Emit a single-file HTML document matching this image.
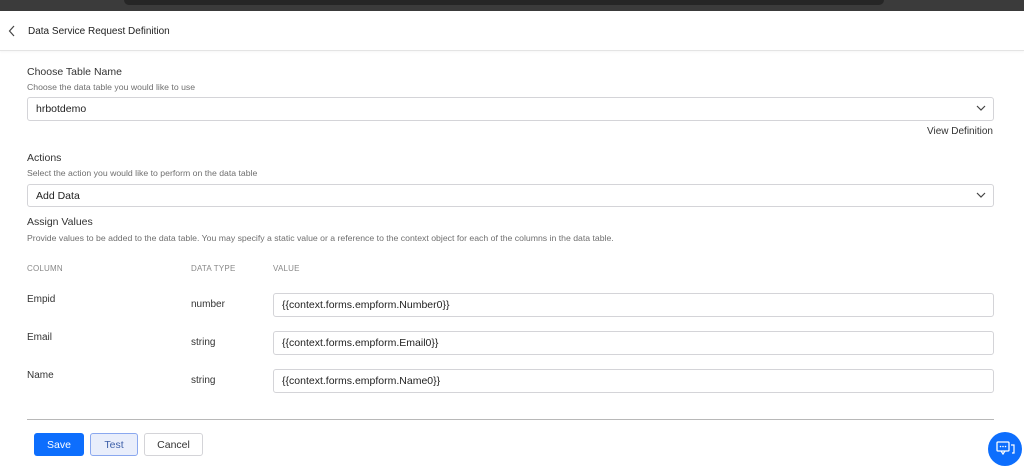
<!DOCTYPE html>
<html><head><meta charset="utf-8"><style>
*{box-sizing:border-box;margin:0;padding:0}
body{width:1024px;height:468px;overflow:hidden;background:#fff;font-family:"Liberation Sans",sans-serif;color:#202124;position:relative}
.a{position:absolute;white-space:nowrap}
.top{position:absolute;left:0;top:0;width:1024px;height:11px;background:#3b3b3b}
.top div{position:absolute;left:124px;width:760px;top:0;height:5px;background:#262626;border-radius:0 0 8px 8px}
.hdr{position:absolute;left:0;top:11px;width:1024px;height:40px;border-bottom:1px solid #e4e4e4;box-shadow:0 1px 2px rgba(0,0,0,.04)}
.h1{font-size:13px;color:#333}
.sub{font-size:8.7px;color:#6f6f6f}
.box{position:absolute;border:1px solid #d4d4d8;border-radius:3px;background:#fff;font-size:10.5px;color:#222;padding-left:8px;display:flex;align-items:center}
.th{font-size:8px;color:#888;letter-spacing:.2px}
.lbl{font-size:10px;color:#333}
.btn{position:absolute;top:433px;height:23px;border-radius:3px;font-size:10.5px;display:flex;align-items:center;justify-content:center}
</style></head><body>
<div class="top"><div></div></div>
<div class="hdr"></div>
<svg class="a" style="left:8px;top:25px" width="8" height="12"><path d="M6 1L1.5 6L6 11" fill="none" stroke="#444" stroke-width="1.2"/></svg>
<div class="a" style="left:28px;top:26px;font-size:10px;color:#222">Data Service Request Definition</div>

<div class="a h1" style="left:27px;top:66px;font-size:10.5px">Choose Table Name</div>
<div class="a sub" style="left:27px;top:82px">Choose the data table you would like to use</div>
<div class="box" style="left:27px;top:97px;width:967px;height:24px">hrbotdemo</div>
<svg class="a" style="left:976px;top:105px" width="10" height="7"><path d="M1 1L5 5L9 1" fill="none" stroke="#444" stroke-width="1.2"/></svg>
<div class="a" style="left:927px;top:126px;font-size:10px;color:#333">View Definition</div>

<div class="a h1" style="left:27px;top:152px;font-size:10.5px">Actions</div>
<div class="a sub" style="left:27px;top:168px">Select the action you would like to perform on the data table</div>
<div class="box" style="left:27px;top:184px;width:967px;height:23px">Add Data</div>
<svg class="a" style="left:976px;top:192px" width="10" height="7"><path d="M1 1L5 5L9 1" fill="none" stroke="#444" stroke-width="1.2"/></svg>

<div class="a h1" style="left:27px;top:216px;font-size:10.5px">Assign Values</div>
<div class="a sub" style="left:27px;top:233px">Provide values to be added to the data table. You may specify a static value or a reference to the context object for each of the columns in the data table.</div>

<div class="a th" style="left:27px;top:264px">COLUMN</div>
<div class="a th" style="left:191px;top:264px">DATA TYPE</div>
<div class="a th" style="left:273px;top:264px">VALUE</div>

<div class="a lbl" style="left:27px;top:294px">Empid</div>
<div class="a lbl" style="left:191px;top:299px">number</div>
<div class="box" style="left:273px;top:293px;width:721px;height:24px">{{context.forms.empform.Number0}}</div>
<div class="a lbl" style="left:27px;top:332px">Email</div>
<div class="a lbl" style="left:191px;top:337px">string</div>
<div class="box" style="left:273px;top:331px;width:721px;height:24px">{{context.forms.empform.Email0}}</div>
<div class="a lbl" style="left:27px;top:370px">Name</div>
<div class="a lbl" style="left:191px;top:375px">string</div>
<div class="box" style="left:273px;top:369px;width:721px;height:24px">{{context.forms.empform.Name0}}</div>

<div class="a" style="left:27px;top:419px;width:967px;height:1px;background:#b8b8b8"></div>
<div class="btn" style="left:34px;width:50px;background:#0d6efd;color:#fff">Save</div>
<div class="btn" style="left:90px;width:48px;background:#e9eefb;border:1px solid #8aa8ef;color:#3d5fa8">Test</div>
<div class="btn" style="left:144px;width:59px;background:#fff;border:1px solid #d4d4d8;color:#333">Cancel</div>
<div class="a" style="left:988px;top:432px;width:34px;height:34px;border-radius:50%;background:#0d6efd"></div>
<svg class="a" style="left:996px;top:441px" width="20" height="16"><rect x="1" y="1" width="12" height="9" rx="1" fill="none" stroke="#fff" stroke-width="1.3"/><path d="M5 10L7 13L9 10" fill="none" stroke="#fff" stroke-width="1.2"/><path d="M15 4H18V12H16" fill="none" stroke="#fff" stroke-width="1.2"/><circle cx="4.5" cy="5.5" r=".8" fill="#fff"/><circle cx="7" cy="5.5" r=".8" fill="#fff"/><circle cx="9.5" cy="5.5" r=".8" fill="#fff"/></svg>
</body></html>
